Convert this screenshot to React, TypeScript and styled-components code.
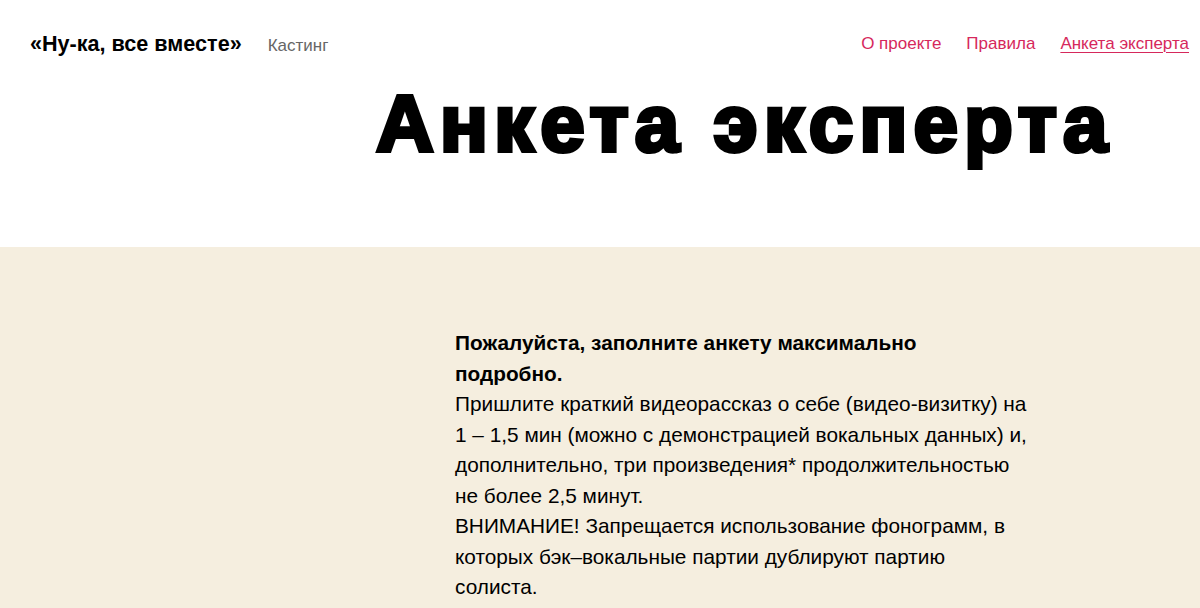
import React from "react";
import styled, { createGlobalStyle } from "styled-components";

const Global = createGlobalStyle`
  html, body { margin: 0; padding: 0; background: #fff; }
  body { font-family: "Liberation Sans", Arial, sans-serif; color: #000; }
  * { box-sizing: border-box; }
`;

const Header = styled.header`
  display: flex;
  align-items: center;
  justify-content: space-between;
  height: 88px;
  padding: 0 11px 0 30px;
`;

const Brand = styled.div`
  display: flex;
  align-items: baseline;
  gap: 26px;
`;

const Logo = styled.a`
  font-size: 21.6px;
  font-weight: 700;
  color: #000;
  text-decoration: none;
`;

const Sub = styled.span`
  font-size: 17px;
  color: #666;
`;

const Nav = styled.nav`
  display: flex;
  gap: 25px;
`;

const NavLink = styled.a<{ $active?: boolean }>`
  font-size: 17px;
  color: #d6285c;
  text-decoration: ${(p) => (p.$active ? "underline" : "none")};
  text-underline-offset: 3px;
  text-decoration-thickness: 1px;
`;

const Hero = styled.section`
  display: flow-root;
  height: 159px;
  padding-left: 376px;
`;

const Title = styled.h1`
  margin: -7px 0 0;
  font-size: 80px;
  line-height: 86px;
  font-weight: 700;
  letter-spacing: 6px;
  -webkit-text-stroke: 4px #000;
  white-space: nowrap;
`;

const Body = styled.section`
  background: #f5eedf;
  min-height: 361px;
  padding: 81px 0 0 455px;
`;

const Text = styled.div`
  width: 575px;
  font-size: 20.8px;
  line-height: 30.5px;
`;

const Strong = styled.p`
  margin: 0;
  font-weight: 700;
  width: 480px;
`;

const Para = styled.p`
  margin: 0;
`;

export default function App() {
  return (
    <>
      <Global />
      <Header>
        <Brand>
          <Logo href="#">«Ну-ка, все вместе»</Logo>
          <Sub>Кастинг</Sub>
        </Brand>
        <Nav>
          <NavLink href="#">О проекте</NavLink>
          <NavLink href="#">Правила</NavLink>
          <NavLink href="#" $active>Анкета эксперта</NavLink>
        </Nav>
      </Header>
      <Hero>
        <Title>Анкета эксперта</Title>
      </Hero>
      <Body>
        <Text>
          <Strong>Пожалуйста, заполните анкету максимально подробно.</Strong>
          <Para>
            Пришлите краткий видеорассказ о себе (видео-визитку) на 1 – 1,5 мин (можно с демонстрацией вокальных данных) и, дополнительно, три произведения* продолжительностью не более 2,5 минут.
          </Para>
          <Para>
            ВНИМАНИЕ! Запрещается использование фонограмм, в которых бэк–вокальные партии дублируют партию солиста.
          </Para>
        </Text>
      </Body>
    </>
  );
}
